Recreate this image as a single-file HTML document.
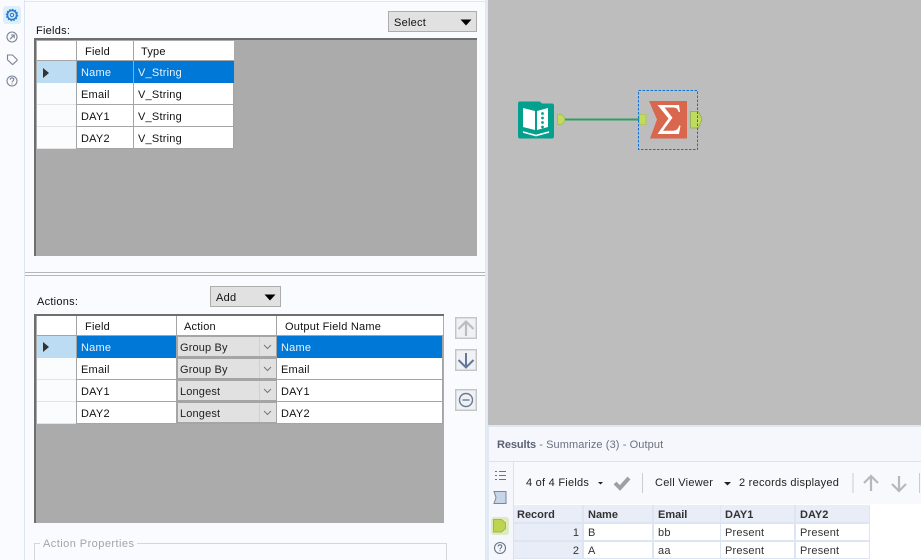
<!DOCTYPE html>
<html><head><meta charset="utf-8">
<style>
html,body{margin:0;padding:0;background:#fff}
#r{position:relative;width:921px;height:560px;overflow:hidden;background:#fafbfe;font-family:"Liberation Sans",sans-serif;font-size:11px;color:#111}
.a{position:absolute}
.t{position:absolute;white-space:nowrap;line-height:14px;letter-spacing:.25px}
.c{position:absolute;background:#fff;box-sizing:border-box;white-space:nowrap;padding-left:4px;letter-spacing:.22px}
.h{padding-left:8px;line-height:22px;height:19px;overflow:hidden}
.l{line-height:24px}
.s{background:#0078d7;color:#e8f2fc}
.rh{position:absolute;background:#fbfcfe;border-bottom:1px solid #e4e4e4;box-sizing:border-box}
.g{position:absolute;background:#e1e1e1;box-sizing:border-box;white-space:nowrap;line-height:22px;height:19px;left:178px;width:98px;padding-left:2px;color:#222;letter-spacing:.15px;overflow:hidden}
.rc{position:absolute;box-sizing:border-box;white-space:nowrap;letter-spacing:.2px;line-height:18px;padding-left:3px}
.rhd{background:#e8edf7;font-weight:bold;color:#333;padding-left:4px;letter-spacing:0;line-height:20px}
.rb{background:#fff;color:#333;padding-left:4px}
</style></head><body><div id="r">

<!-- left rail -->
<div class="a" style="left:24px;top:0;width:1px;height:560px;background:#dce5f3"></div>
<div class="a" style="left:25px;top:1px;width:460px;height:1px;background:#dfe7f2"></div>
<div class="a" style="left:3px;top:6px;width:18px;height:18px;background:#dfeefb;border-radius:3px"></div>
<svg class="a" style="left:0;top:0" width="24" height="92" viewBox="0 0 24 92" fill="none">
 <circle cx="12" cy="15" r="4.6" stroke="#2b7fd0" stroke-width="1.6"/><circle cx="12" cy="15" r="1.7" stroke="#2b7fd0" stroke-width="1.1"/>
 <circle cx="12" cy="15" r="5.6" stroke="#2b7fd0" stroke-width="1.2" stroke-dasharray="1.6 1.3"/>
 <circle cx="12" cy="37" r="5" stroke="#7a8494" stroke-width="1.1"/><path d="M10 39.2L14 35.2M11 35h3.200v3.200" stroke="#7a8494" stroke-width="1.1"/>
 <path d="M7.500 55h5l4.500 4.500v1l-4 3.800h-.8L7.500 59.800z" stroke="#7a8494" stroke-width="1.1"/>
 <circle cx="12" cy="81" r="5" stroke="#7a8494" stroke-width="1.1"/><path d="M10.300 79.600c0-2.200 3.500-2.200 3.500 0 0 1.300-1.800 1.300-1.800 2.800M12 83.400v1" stroke="#7a8494" stroke-width="1.1"/>
</svg>

<!-- fields section -->
<div class="t" style="left:36px;top:24px">Fields:</div>
<div class="a" style="left:388px;top:11px;width:89px;height:21px;background:#e1e1e1;border:1px solid #adadad;box-sizing:border-box"></div>
<div class="t" style="left:394px;top:16px">Select</div>
<svg class="a" style="left:460px;top:19px" width="12" height="7"><path d="M0.500 0.500H11.500L6 6.500z" fill="#000"/></svg>

<div class="a" style="left:34px;top:38px;width:443px;height:218px;background:#ababab;border-top:2px solid #6e6e6e;border-left:2px solid #6e6e6e;box-sizing:border-box"></div>
<div class="a" style="left:37px;top:41px;width:197px;height:108px;background:#a5a5a5"></div>
<div class="c" style="left:37px;top:41px;width:39px;height:19px"></div>
<div class="c h" style="left:77px;top:41px;width:56px">Field</div>
<div class="c h" style="left:134px;top:41px;width:100px;padding-left:7px">Type</div>
<div class="a" style="left:37px;top:61px;width:39px;height:22px;background:#bcdcf3"></div>
<svg class="a" style="left:42px;top:67px" width="8" height="12"><path d="M1 1L7 6L1 11z" fill="#333"/></svg>
<div class="c s l" style="left:77px;top:61px;width:56px;height:22px">Name</div>
<div class="c s l" style="left:134px;top:61px;width:100px;height:22px">V_String</div>
<div class="rh" style="left:37px;top:83px;width:39px;height:22px"></div>
<div class="c l" style="left:77px;top:83px;width:56px;height:21px">Email</div>
<div class="c l" style="left:134px;top:83px;width:99px;height:21px">V_String</div>
<div class="rh" style="left:37px;top:105px;width:39px;height:22px"></div>
<div class="c l" style="left:77px;top:105px;width:56px;height:21px">DAY1</div>
<div class="c l" style="left:134px;top:105px;width:99px;height:21px">V_String</div>
<div class="rh" style="left:37px;top:127px;width:39px;height:22px"></div>
<div class="c l" style="left:77px;top:127px;width:56px;height:21px">DAY2</div>
<div class="c l" style="left:134px;top:127px;width:99px;height:21px">V_String</div>

<!-- splitter -->
<div class="a" style="left:25px;top:272px;width:460px;height:1px;background:#b5b5b5"></div>
<div class="a" style="left:25px;top:275px;width:460px;height:1px;background:#b5b5b5"></div>

<!-- actions -->
<div class="t" style="left:37px;top:295px">Actions:</div>
<div class="a" style="left:210px;top:286px;width:71px;height:21px;background:#e1e1e1;border:1px solid #adadad;box-sizing:border-box"></div>
<div class="t" style="left:216px;top:291px">Add</div>
<svg class="a" style="left:264px;top:294px" width="12" height="7"><path d="M0.500 0.500H11.500L6 6.500z" fill="#000"/></svg>

<div class="a" style="left:34px;top:314px;width:410px;height:209px;background:#ababab;border-top:2px solid #6e6e6e;border-left:2px solid #6e6e6e;box-sizing:border-box"></div>
<div class="a" style="left:37px;top:316px;width:406px;height:108px;background:#a5a5a5"></div>
<div class="c" style="left:37px;top:316px;width:39px;height:19px"></div>
<div class="c h" style="left:77px;top:316px;width:99px">Field</div>
<div class="c h" style="left:177px;top:316px;width:99px;padding-left:7px">Action</div>
<div class="c h" style="left:277px;top:316px;width:166px">Output Field Name</div>

<div class="a" style="left:37px;top:336px;width:39px;height:22px;background:#bcdcf3"></div>
<svg class="a" style="left:42px;top:341px" width="8" height="12"><path d="M1 1L7 6L1 11z" fill="#333"/></svg>
<div class="c s l" style="left:77px;top:336px;width:99px;height:22px">Name</div>
<div class="g" style="top:337px">Group By</div>
<div class="c s l" style="left:277px;top:336px;width:165px;height:22px">Name</div>

<div class="rh" style="left:37px;top:358px;width:39px;height:22px"></div>
<div class="c l" style="left:77px;top:358px;width:99px;height:21px">Email</div>
<div class="g" style="top:359px">Group By</div>
<div class="c l" style="left:277px;top:358px;width:165px;height:21px">Email</div>

<div class="rh" style="left:37px;top:380px;width:39px;height:22px"></div>
<div class="c l" style="left:77px;top:380px;width:99px;height:21px">DAY1</div>
<div class="g" style="top:381px">Longest</div>
<div class="c l" style="left:277px;top:380px;width:165px;height:21px">DAY1</div>

<div class="rh" style="left:37px;top:402px;width:39px;height:22px"></div>
<div class="c l" style="left:77px;top:402px;width:99px;height:21px">DAY2</div>
<div class="g" style="top:403px">Longest</div>
<div class="c l" style="left:277px;top:402px;width:165px;height:21px">DAY2</div>

<svg class="a" style="left:177px;top:336px" width="100" height="88" fill="none">
 <path d="M82.500 1v19M82.500 23v19M82.500 45v19M82.500 67v19" stroke="#d0d0d0"/>
 <path d="M87 9l3.500 3.500L94 9M87 31l3.500 3.500L94 31M87 53l3.500 3.500L94 53M87 75l3.500 3.500L94 75" stroke="#777" stroke-width="1"/>
</svg>

<!-- side buttons -->
<svg class="a" style="left:455px;top:317px" width="24" height="96" fill="none">
 <rect x=".7" y=".7" width="20.600" height="20.600" fill="#eff1f5" stroke="#c4c4c4" stroke-width="1.400"/>
 <path d="M11 5V19M3.500 12L11 4.500L18.500 12" stroke="#bcbcbc" stroke-width="2.200"/>
 <rect x=".7" y="32.700" width="20.600" height="20.600" fill="#eff1f5" stroke="#c4c4c4" stroke-width="1.400"/>
 <path d="M11 36V50M3.500 43L11 50.500L18.500 43" stroke="#64779a" stroke-width="2"/>
 <rect x=".7" y="72.700" width="20.600" height="20.600" fill="#eff1f5" stroke="#c4c4c4" stroke-width="1.400"/>
 <circle cx="11" cy="83" r="6.500" stroke="#6a7a93" stroke-width="1.400"/><path d="M7.500 83H14.500" stroke="#6a7a93" stroke-width="1.400"/>
</svg>

<!-- action properties -->
<div class="a" style="left:34px;top:543px;width:413px;height:30px;border:1px solid #d4d6dc;box-sizing:border-box"></div>
<div class="t" style="left:40px;top:537px;background:#fafbfe;padding:0 3px;color:#a3a3ad;letter-spacing:.45px">Action Properties</div>

<!-- canvas -->
<div class="a" style="left:485px;top:0;width:3px;height:560px;background:#e2e8f4"></div>
<div class="a" style="left:488px;top:0;width:433px;height:425px;background:#bdbdbd"></div>

<svg class="a" style="left:510px;top:85px" width="200" height="70" fill="none">
 <g transform="translate(0,9)">
 <path d="M8 9.500a2 2 0 0 1 2-2h20l2 2h10a2 2 0 0 1 2 2v31a2 2 0 0 1-2 2H10a2 2 0 0 1-2-2z" fill="#04a08e"/>
 <path d="M13 14l12 3v19l-12-3zM27 17l11-3v19l-11 3z" fill="#fff"/>
 <path d="M13 38l13 3.500 13-3.500" stroke="#fff" stroke-width="1.600"/>
 <circle cx="32.500" cy="19.500" r="1.400" fill="#04a08e"/><circle cx="32.500" cy="24" r="1.400" fill="#04a08e"/><circle cx="32.500" cy="28.500" r="1.400" fill="#04a08e"/><circle cx="32.500" cy="33" r="1.400" fill="#04a08e"/>
 </g>
 <path d="M54 34.500H131" stroke="#2ea160" stroke-width="2"/>
 <path d="M47.500 29.500h4l3 3v4l-3 3h-4z" fill="#c1db5e" stroke="#a6c257"/>
 <path d="M129.500 29.500h6.500v10h-6.500z" fill="#c1db5e" stroke="#b0c85a"/>
 <path d="M139 16h38v37.500h-37l7-19z" fill="#d8674d"/>
 <g transform="translate(0,9)"><path d="M147.500 11h21.500l1 7-1.500-.2c-.6-2.800-2-4.200-5-4.300h-9l8 10.200-9.500 13h10c3.200 0 5-1.300 6.200-5.200l1.300.2-1.500 8.300h-21.500l11-15.500z" fill="#fff"/></g>
 <path d="M180.500 26.500h8l3.500 8-3.500 8.500h-8z" fill="#c1db5e" stroke="#97b258"/>
 <rect x="128.500" y="5.500" width="59" height="59" stroke="#0f72cf" stroke-dasharray="2.500 1.500"/>
</svg>

<!-- results -->
<div class="a" style="left:485px;top:425px;width:436px;height:2px;background:#dfe6f2"></div>
<div class="a" style="left:485px;top:425px;width:4px;height:135px;background:#e2e8f4"></div>
<div class="a" style="left:489px;top:427px;width:432px;height:133px;background:#f5f7fc"></div>
<div class="t" style="left:497px;top:438px;color:#68707f;letter-spacing:.1px"><b style="color:#5a6272;letter-spacing:-.1px">Results</b> - Summarize (3) - Output</div>
<div class="a" style="left:489px;top:461px;width:432px;height:1px;background:#d9e2f0"></div>
<div class="a" style="left:513px;top:461px;width:1px;height:99px;background:#d9e2f0"></div>
<div class="a" style="left:514px;top:462px;width:407px;height:98px;background:#fff"></div>
<div class="a" style="left:514px;top:462px;width:407px;height:42px;background:#f8f9fd"></div>

<svg class="a" style="left:489px;top:462px" width="24" height="98" fill="none">
 <path d="M6 9.500h2M6 13.500h2M6 17.500h2M10 9.500h7M10 13.500h7M10 17.500h7" stroke="#66738a"/>
 <path d="M5 29.500h12v12H5l2-6z" fill="#c8d4e8" stroke="#7a869a"/>
 <rect x="2" y="55" width="18" height="18" rx="3" fill="#dcebc1"/>
 <path d="M4.500 57.500h8l4 3.500v5.500l-4 3.500h-8z" fill="#bcd44f" stroke="#9fb943"/>
 <circle cx="11" cy="86" r="5.500" stroke="#66738a" stroke-width="1.100"/><path d="M9.200 84.500c0-2.300 3.600-2.300 3.600 0 0 1.400-1.800 1.400-1.800 2.800M11 88.200v1" stroke="#66738a" stroke-width="1.100"/>
</svg>

<div class="t" style="left:526px;top:476px;color:#222">4 of 4 Fields</div>
<svg class="a" style="left:595px;top:470px" width="265" height="26" fill="none">
 <path d="M3 12h5l-2.500 2.500z" fill="#222"/>
 <path d="M20 13l5 5 9-10" stroke="#a0a0a0" stroke-width="4"/>
 <path d="M47.500 3V23" stroke="#c9ccd2"/>
 <path d="M258 3V23" stroke="#c9ccd2"/>
</svg>
<div class="t" style="left:655px;top:476px;color:#222">Cell Viewer</div>
<svg class="a" style="left:724px;top:482px" width="8" height="4"><path d="M0 0h7L3.500 3.500z" fill="#222"/></svg>
<div class="t" style="left:739px;top:476px;color:#222">2 records displayed</div>
<svg class="a" style="left:860px;top:472px" width="61" height="24" fill="none">
 <path d="M11 19V4M4 11L11 4L18 11" stroke="#b8b8b8" stroke-width="2.200"/>
 <path d="M39 4V19M32 12L39 19L46 12" stroke="#b8b8b8" stroke-width="2.200"/>
 <path d="M59.500 1V21" stroke="#c9ccd2"/>
</svg>

<!-- results table -->
<div class="a" style="left:514px;top:505px;width:356px;height:54px;background:#dde5f3"></div>
<div class="rc rhd" style="left:514px;top:505px;width:68px;height:17px;padding-left:3px">Record</div>
<div class="rc rhd" style="left:584px;top:505px;width:68px;height:17px">Name</div>
<div class="rc rhd" style="left:654px;top:505px;width:66px;height:17px">Email</div>
<div class="rc rhd" style="left:721px;top:505px;width:73px;height:17px">DAY1</div>
<div class="rc rhd" style="left:796px;top:505px;width:73px;height:17px">DAY2</div>
<div class="rc rhd" style="left:514px;top:524px;width:68px;height:16px;text-align:right;font-weight:normal;padding-right:3px;line-height:18px">1</div>
<div class="rc rb" style="left:584px;top:524px;width:68px;height:16px">B</div>
<div class="rc rb" style="left:654px;top:524px;width:66px;height:16px">bb</div>
<div class="rc rb" style="left:721px;top:524px;width:73px;height:16px">Present</div>
<div class="rc rb" style="left:796px;top:524px;width:73px;height:16px">Present</div>
<div class="rc rhd" style="left:514px;top:542px;width:68px;height:16px;text-align:right;font-weight:normal;padding-right:3px;line-height:18px">2</div>
<div class="rc rb" style="left:584px;top:542px;width:68px;height:16px">A</div>
<div class="rc rb" style="left:654px;top:542px;width:66px;height:16px">aa</div>
<div class="rc rb" style="left:721px;top:542px;width:73px;height:16px">Present</div>
<div class="rc rb" style="left:796px;top:542px;width:73px;height:16px">Present</div>

</div></body></html>
